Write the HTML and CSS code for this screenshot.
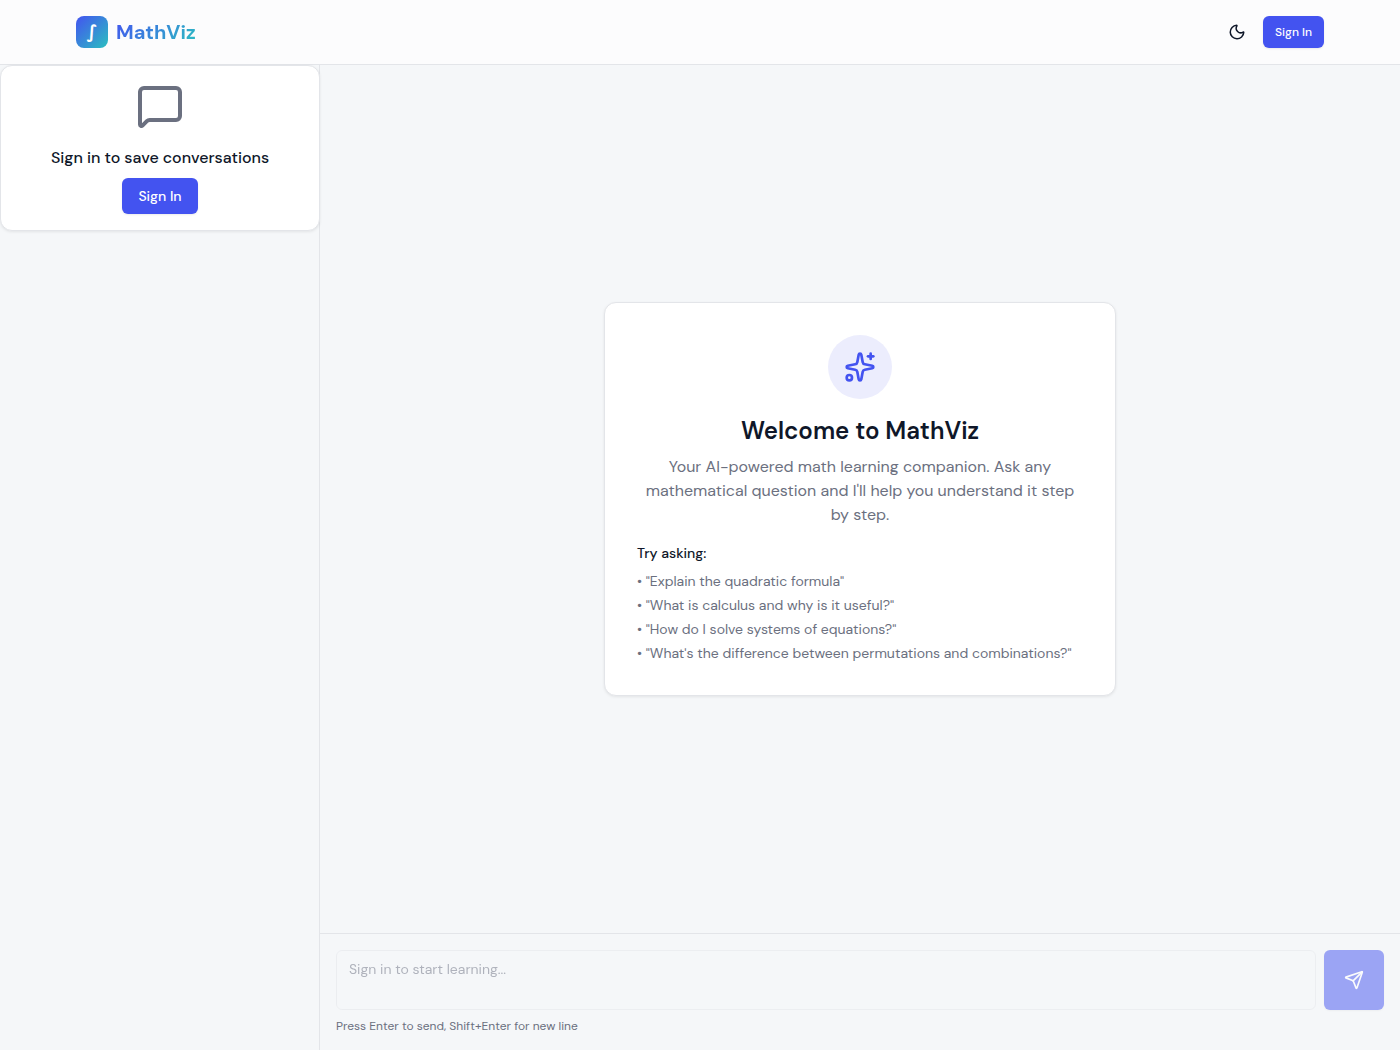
FILE: index.html
```html
<!DOCTYPE html>
<html lang="en">
<head>
    <meta charset="UTF-8">
    <meta name="viewport" content="width=device-width, initial-scale=1.0">
    <title>MathViz</title>
    <link rel="stylesheet" href="styles.css">
</head>
<body>

    <header class="header">
        <div class="header-inner">
            <a href="#" class="brand">
                <span class="brand-mark">∫</span>
                <span class="brand-name">MathViz</span>
            </a>
            <nav class="header-actions">
                <button type="button" class="icon-button" aria-label="Toggle theme">
                    <svg class="icon" width="18" height="18" viewBox="0 0 24 24">
                        <path d="M20.985 12.486a9 9 0 1 1-9.473-9.472c.405-.022.617.46.402.803a6 6 0 0 0 8.268 8.268c.344-.215.825-.004.803.401"/>
                    </svg>
                </button>
                <button type="button" class="button button-small">Sign In</button>
            </nav>
        </div>
    </header>

    <div class="layout">
        <!-- Conversations -->
        <aside class="sidebar">
            <div class="card signin-card">
                <svg class="icon signin-icon" width="48" height="48" viewBox="0 0 24 24">
                    <path d="M22 17a2 2 0 0 1-2 2H6.828a2 2 0 0 0-1.414.586l-2.202 2.202A.71.71 0 0 1 2 21.286V5a2 2 0 0 1 2-2h16a2 2 0 0 1 2 2z"/>
                </svg>
                <h3 class="signin-title">Sign in to save conversations</h3>
                <button type="button" class="button">Sign In</button>
            </div>
        </aside>

        <!-- Chat -->
        <main class="chat">
            <div class="messages">
                <section class="card welcome">
                    <div class="welcome-icon">
                        <svg class="icon" width="32" height="32" viewBox="0 0 24 24">
                            <path d="M11.017 2.814a1 1 0 0 1 1.966 0l1.051 5.558a2 2 0 0 0 1.594 1.594l5.558 1.051a1 1 0 0 1 0 1.966l-5.558 1.051a2 2 0 0 0-1.594 1.594l-1.051 5.558a1 1 0 0 1-1.966 0l-1.051-5.558a2 2 0 0 0-1.594-1.594l-5.558-1.051a1 1 0 0 1 0-1.966l5.558-1.051a2 2 0 0 0 1.594-1.594z"/>
                            <path d="M20 2v4"/>
                            <path d="M22 4h-4"/>
                            <circle cx="4" cy="20" r="2"/>
                        </svg>
                    </div>
                    <h2 class="welcome-title">Welcome to MathViz</h2>
                    <p class="welcome-text">Your AI-powered math learning companion. Ask any mathematical question and I'll help you understand it step by step.</p>
                    <div class="examples">
                        <p class="examples-title">Try asking:</p>
                        <ul class="examples-list">
                            <li>• "Explain the quadratic formula"</li>
                            <li>• "What is calculus and why is it useful?"</li>
                            <li>• "How do I solve systems of equations?"</li>
                            <li>• "What's the difference between permutations and combinations?"</li>
                        </ul>
                    </div>
                </section>
            </div>

            <form class="composer">
                <div class="composer-row">
                    <textarea class="composer-input" placeholder="Sign in to start learning..." aria-label="Message" disabled></textarea>
                    <button type="submit" class="button composer-send" aria-label="Send" disabled>
                        <svg class="icon" width="20" height="20" viewBox="0 0 24 24">
                            <path d="M14.536 21.686a.5.5 0 0 0 .937-.024l6.5-19a.496.496 0 0 0-.635-.635l-19 6.5a.5.5 0 0 0-.024.937l7.93 3.18a2 2 0 0 1 1.112 1.11z"/>
                            <path d="m21.854 2.147-10.94 10.939"/>
                        </svg>
                    </button>
                </div>
                <p class="composer-hint">Press Enter to send, Shift+Enter for new line</p>
            </form>
        </main>
    </div>

</body>
</html>
```

FILE: styles.css
```css
* {
    box-sizing: border-box;
    margin: 0;
    padding: 0;
}
body {
    display: flex;
    flex-direction: column;
    min-height: 100vh;
    font-family: "DM Sans", "Liberation Sans", sans-serif;
    font-size: 16px;
    line-height: 24px;
    color: #0f1729;
    background: #f5f7f9;
}
button, textarea {
    font-family: inherit;
}
.icon {
    display: block;
    fill: none;
    stroke: currentColor;
    stroke-width: 2;
    stroke-linecap: round;
    stroke-linejoin: round;
}

/* Header */
.header {
    background: #fcfcfd;
    border-bottom: 1px solid #e3e5e9;
}
.header-inner {
    display: flex;
    align-items: center;
    justify-content: space-between;
    max-width: 1280px;
    height: 64px;
    margin: 0 auto;
    padding: 0 16px;
}
.brand {
    display: flex;
    align-items: center;
    gap: 8px;
    text-decoration: none;
}
.brand-mark {
    display: flex;
    align-items: center;
    justify-content: center;
    width: 32px;
    height: 32px;
    border-radius: 8px;
    background: linear-gradient(135deg, #4353f0, #2bbfc0);
    color: white;
    font-family: "DejaVu Sans", sans-serif;
    font-size: 18px;
    font-weight: 700;
}
.brand-name {
    font-size: 20px;
    line-height: 28px;
    font-weight: 700;
    color: transparent;
    background: linear-gradient(135deg, #4353f0, #2bc0c0);
    background-clip: text;
    -webkit-background-clip: text;
}
.header-actions {
    display: flex;
    align-items: center;
    gap: 8px;
}

/* Buttons */
.button {
    height: 36px;
    padding: 0 16px;
    border: none;
    border-radius: 6px;
    background: #4353f0;
    color: white;
    font-size: 14px;
    font-weight: 500;
    box-shadow: 0 1px 2px rgba(0, 0, 0, 0.08);
    cursor: pointer;
}
.button:hover {
    background: #3746dc;
}
.button-small {
    height: 32px;
    padding: 0 12px;
    font-size: 12px;
}
.icon-button {
    display: flex;
    align-items: center;
    justify-content: center;
    width: 36px;
    height: 36px;
    border: none;
    border-radius: 6px;
    background: none;
    color: inherit;
    cursor: pointer;
}

.card {
    background: white;
    border: 1px solid #e3e5e9;
    border-radius: 12px;
    box-shadow: 0 1px 3px rgba(0, 0, 0, 0.08);
}

.layout {
    display: flex;
    flex: 1;
}

/* Sidebar */
.sidebar {
    width: 320px;
    flex-shrink: 0;
    box-shadow: inset -1px 0 #e3e5e9;
}
.signin-card {
    display: flex;
    flex-direction: column;
    align-items: center;
    padding: 16px;
}
.signin-icon {
    color: #6b7080;
    margin-bottom: 16px;
}
.signin-title {
    font-size: 16px;
    font-weight: 500;
    margin-bottom: 8px;
}

/* Chat */
.chat {
    display: flex;
    flex-direction: column;
    flex: 1;
    min-width: 0;
}
.messages {
    display: flex;
    align-items: center;
    justify-content: center;
    flex: 1;
    padding: 16px;
}
.welcome {
    width: 100%;
    max-width: 512px;
    padding: 32px;
    text-align: center;
}
.welcome-icon {
    display: flex;
    align-items: center;
    justify-content: center;
    width: 64px;
    height: 64px;
    margin: 0 auto 16px;
    border-radius: 50%;
    background: #ecedfd;
    color: #4353f0;
}
.welcome-title {
    font-size: 24px;
    line-height: 32px;
    font-weight: 600;
    margin-bottom: 8px;
}
.welcome-text {
    color: #6b7080;
    margin-bottom: 16px;
}
.examples {
    font-size: 14px;
    line-height: 20px;
    text-align: left;
}
.examples-title {
    font-weight: 500;
    margin-bottom: 8px;
}
.examples-list {
    display: flex;
    flex-direction: column;
    gap: 4px;
    list-style: none;
    color: #6b7080;
}

/* Message form */
.composer {
    padding: 16px;
    border-top: 1px solid #e3e5e9;
}
.composer-row {
    display: flex;
    gap: 8px;
    margin-bottom: 8px;
}
.composer-input {
    flex: 1;
    height: 60px;
    padding: 8px 12px;
    border: 1px solid #e3e5e9;
    border-radius: 6px;
    background: transparent;
    font-size: 14px;
    line-height: 20px;
    resize: none;
}
.composer-input::placeholder {
    color: #6b7080;
}
.composer-input:disabled,
.composer-send:disabled {
    opacity: 0.5;
    cursor: not-allowed;
}
.composer-send {
    display: flex;
    align-items: center;
    justify-content: center;
    width: 60px;
    height: 60px;
    padding: 0;
}
.composer-hint {
    font-size: 12px;
    line-height: 16px;
    color: #6b7080;
}
```
